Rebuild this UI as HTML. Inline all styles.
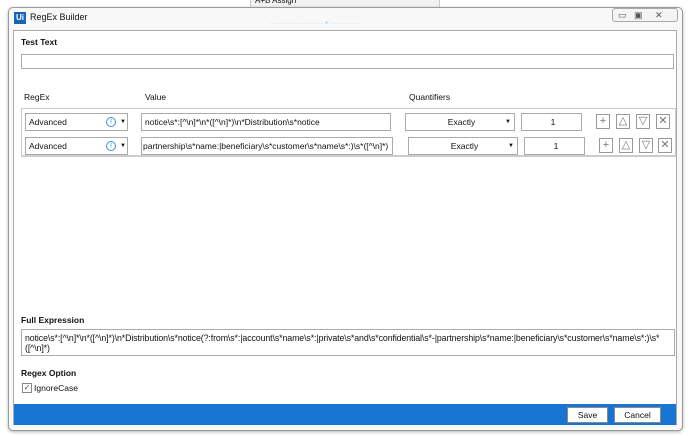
<!DOCTYPE html>
<html><head><style>
*{box-sizing:border-box;margin:0;padding:0}
body{width:690px;height:436px;background:#fff;position:relative;overflow:hidden;font-family:"Liberation Sans",sans-serif;font-size:8.5px;color:#111}
.a{position:absolute}
.box{position:absolute;border:1px solid #aaa;background:#fff}
.b{font-weight:bold}
.t{white-space:nowrap;line-height:16px;padding-left:3px;overflow:hidden}
.btn{position:absolute;border:1px solid #999;background:#fff;width:14px;height:15px;text-align:center;line-height:13px;color:#777;font-size:11px}
</style></head><body>
<div class="a" style="left:250px;top:0;width:190px;height:7px;background:#f2f2f2;border-left:1px solid #ccc;border-right:1px solid #ccc"></div>
<div class="a" style="left:255px;top:-4px;font-size:8px">A+B Assign</div>
<div class="a" style="left:8px;top:7px;width:675px;height:424px;border:1px solid #9a9a9a;border-radius:5px;background:#f8f8f8;box-shadow:0 1px 3px rgba(0,0,0,.3)"></div>
<div class="a" style="left:14px;top:12px;width:12px;height:12px;background:#1a64b5;color:#fff;font-size:8px;font-weight:bold;text-align:center;line-height:12px">Ui</div>
<div class="a" style="left:30px;top:12px;font-size:9px">RegEx Builder</div>
<div class="a" style="left:270px;top:19px;color:#b8d4f0;font-size:6px">……………………… ▸ ……………</div>
<div class="a" style="left:612px;top:8px;width:66px;height:14px;border:1px solid #aaa;border-radius:3px;background:#f4f4f4;font-size:9px;color:#555;line-height:12px">&nbsp;&nbsp;▭&nbsp;&nbsp;&nbsp;▣&nbsp;&nbsp;&nbsp;&nbsp;&nbsp;✕</div>
<div class="a" style="left:13px;top:30px;width:664px;height:395px;background:#fff;border:1px solid #aaa"></div>
<div class="a b" style="left:21px;top:37px">Test Text</div>
<div class="box" style="left:21px;top:54px;width:653px;height:15px"></div>
<div class="a" style="left:24px;top:92px">RegEx</div>
<div class="a" style="left:145px;top:92px">Value</div>
<div class="a" style="left:409px;top:92px">Quantifiers</div>
<div class="a" style="left:21px;top:108px;width:655px;height:49px;border:1px solid #ccc;border-bottom:2px solid #ccc"></div>

<div class="box t" style="left:25px;top:113px;width:103px;height:18px">Advanced<span style="position:absolute;left:80px;top:3px;width:10px;height:10px;border:1px solid #3a8ee6;border-radius:50%;color:#3a8ee6;font-size:7px;line-height:8px;text-align:center">i</span><span style="position:absolute;left:94px;font-size:6px">▼</span></div>
<div class="box t" style="left:141px;top:113px;width:250px;height:18px">notice\s*:[^\n]*\n*([^\n]*)\n*Distribution\s*notice</div>
<div class="box t" style="left:405px;top:113px;width:110px;height:18px;text-align:center">Exactly<span style="position:absolute;right:3px;font-size:6px">▼</span></div>
<div class="box t" style="left:521px;top:113px;width:61px;height:18px;text-align:center">1</div>
<div class="btn" style="left:596px;top:114px">+</div><div class="btn" style="left:616px;top:114px">△</div><div class="btn" style="left:636px;top:114px">▽</div><div class="btn" style="left:656px;top:114px">✕</div>

<div class="box t" style="left:25px;top:137px;width:103px;height:18px">Advanced<span style="position:absolute;left:80px;top:3px;width:10px;height:10px;border:1px solid #3a8ee6;border-radius:50%;color:#3a8ee6;font-size:7px;line-height:8px;text-align:center">i</span><span style="position:absolute;left:94px;font-size:6px">▼</span></div>
<div class="box t" style="left:141px;top:137px;width:252px;height:18px;padding-left:1px">partnership\s*name:|beneficiary\s*customer\s*name\s*:)\s*([^\n]*)</div>
<div class="box t" style="left:408px;top:137px;width:110px;height:18px;text-align:center">Exactly<span style="position:absolute;right:3px;font-size:6px">▼</span></div>
<div class="box t" style="left:524px;top:137px;width:61px;height:18px;text-align:center">1</div>
<div class="btn" style="left:599px;top:138px">+</div><div class="btn" style="left:619px;top:138px">△</div><div class="btn" style="left:639px;top:138px">▽</div><div class="btn" style="left:658px;top:138px">✕</div>

<div class="a b" style="left:21px;top:315px">Full Expression</div>
<div class="box" style="left:21px;top:329px;width:654px;height:27px;padding:3px 3px;font-size:8.8px;line-height:10px;letter-spacing:-0.1px;overflow:hidden;white-space:nowrap">notice\s*:[^\n]*\n*([^\n]*)\n*Distribution\s*notice(?:from\s*:|account\s*name\s*:|private\s*and\s*confidential\s*-|partnership\s*name:|beneficiary\s*customer\s*name\s*:)\s*<br>([^\n]*)</div>
<div class="a b" style="left:21px;top:368px">Regex Option</div>
<div class="a" style="left:22px;top:383px;width:10px;height:10px;border:1px solid #888;font-size:8px;line-height:8px;text-align:center;color:#444">✓</div>
<div class="a" style="left:34px;top:383px">IgnoreCase</div>
<div class="a" style="left:14px;top:404px;width:662px;height:21px;background:#1874d2"></div>
<div class="a" style="left:567px;top:407px;width:41px;height:16px;background:#fff;border:1px solid #888;text-align:center;line-height:14px">Save</div>
<div class="a" style="left:614px;top:407px;width:47px;height:16px;background:#fff;border:1px solid #888;text-align:center;line-height:14px">Cancel</div>
</body></html>
